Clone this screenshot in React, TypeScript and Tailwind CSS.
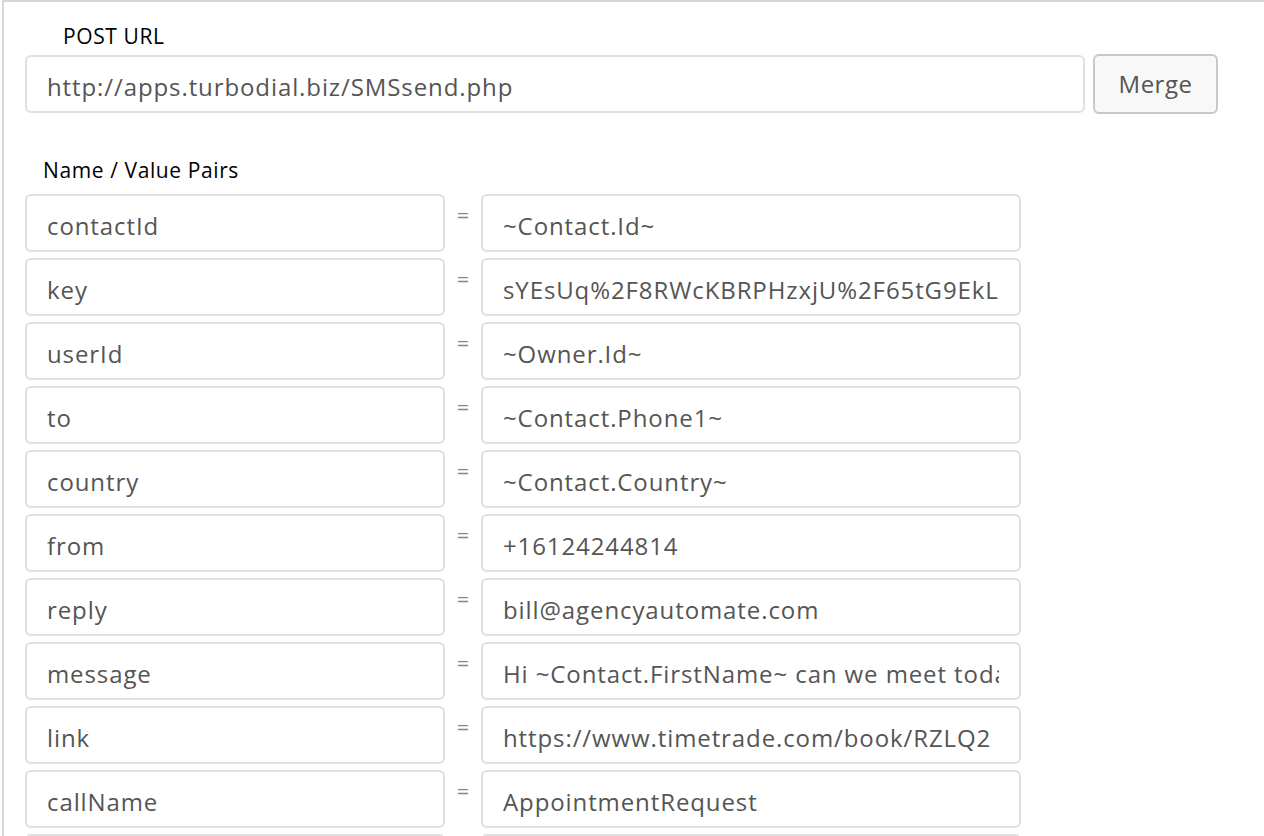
import React from 'react';

const pairs: [string, string][] = [
  ['contactId', '~Contact.Id~'],
  ['key', 'sYEsUq%2F8RWcKBRPHzxjU%2F65tG9EkL0rXgQm'],
  ['userId', '~Owner.Id~'],
  ['to', '~Contact.Phone1~'],
  ['country', '~Contact.Country~'],
  ['from', '+16124244814'],
  ['reply', 'bill@agencyautomate.com'],
  ['message', 'Hi ~Contact.FirstName~ can we meet today?'],
  ['link', 'https://www.timetrade.com/book/RZLQ2'],
  ['callName', 'AppointmentRequest'],
  ['', ''],
];

const inputCls =
  'h-[58px] rounded-[6px] border-2 border-[#e0e0e0] bg-white pl-[20px] pr-[20px] pt-[4px] text-[24px] tracking-[0.9px] text-[#555] outline-none';

export default function App() {
  return (
    <div className="h-[836px] w-[1264px] overflow-hidden bg-white" style={{ fontFamily: '"Open Sans", Lato, sans-serif' }}>
      <div className="ml-[2px] h-full border-l-2 border-t-2 border-[#d6d6d6]">
        <div className="pl-[59px] pt-[21px] text-[21px] leading-[26px] tracking-[0.6px] text-black">POST URL</div>
        <div className="mt-[5px] flex items-center gap-[8px] pl-[21px]">
          <input readOnly value="http://apps.turbodial.biz/SMSsend.php" className={`${inputCls} w-[1060px]`} />
          <button className="h-[60px] w-[125px] rounded-[6px] border-2 border-[#c8c8c8] bg-[#f8f8f8] text-[24px] tracking-[0.5px] text-[#555]">
            Merge
          </button>
        </div>
        <div className="pl-[39px] pt-[43px] text-[21px] leading-[26px] tracking-[0.6px] text-black">Name / Value Pairs</div>
        <div className="mt-[11px] flex flex-col gap-[6px] pl-[21px]">
          {pairs.map(([n, v], i) => (
            <div key={i} className="flex items-start">
              <input readOnly value={n} className={`${inputCls} w-[420px]`} />
              <span className="w-[36px] pt-[8px] text-center text-[22px] leading-[24px] text-[#888]">=</span>
              <input readOnly value={v} className={`${inputCls} w-[540px]`} />
            </div>
          ))}
        </div>
      </div>
    </div>
  );
}
